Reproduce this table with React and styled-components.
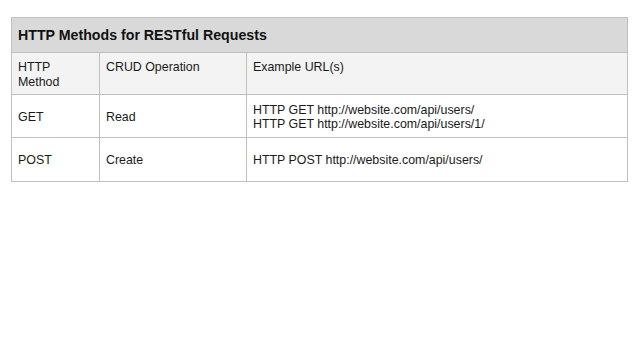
import React from "react";
import styled, { createGlobalStyle } from "styled-components";

const GlobalStyle = createGlobalStyle`
  body {
    margin: 0;
    background: #ffffff;
    font-family: "Liberation Sans", Arial, sans-serif;
    color: #1a1a1a;
  }
`;

const Page = styled.div`
  width: 638px;
  height: 359px;
  padding: 17px 11px 0 11px;
  box-sizing: border-box;
`;

const Table = styled.table`
  width: 617px;
  border-collapse: collapse;
  table-layout: fixed;
  font-size: 12.4px;
  line-height: 14.5px;
`;

const TitleCell = styled.th`
  background: #d9d9d9;
  border: 1px solid #c0c0c0;
  height: 35px;
  padding: 0 6px;
  box-sizing: border-box;
  text-align: left;
  font-size: 14.2px;
  font-weight: bold;
  color: #111;
`;

const Row = styled.tr`
  background: ${props => (props.head ? "#f3f3f3" : "#ffffff")};
`;

const Cell = styled.td`
  border: 1px solid #c0c0c0;
  height: ${props => props.h || 43}px;
  padding: ${props => (props.top ? "7px 6px 0" : "2px 6px 0")};
  box-sizing: border-box;
  vertical-align: ${props => (props.top ? "top" : "middle")};
  text-align: left;
`;

const rows = [
  { method: "GET", op: "Read", urls: ["HTTP GET http://website.com/api/users/", "HTTP GET http://website.com/api/users/1/"] },
  { method: "POST", op: "Create", urls: ["HTTP POST http://website.com/api/users/"] }
];

export default function App() {
  return (
    <>
      <GlobalStyle />
      <Page>
        <Table>
          <colgroup>
            <col style={{ width: 88 }} />
            <col style={{ width: 147 }} />
            <col />
          </colgroup>
          <tbody>
            <tr>
              <TitleCell colSpan={3}>HTTP Methods for RESTful Requests</TitleCell>
            </tr>
            <Row head>
              <Cell top h={42}>HTTP<br />Method</Cell>
              <Cell top h={42}>CRUD Operation</Cell>
              <Cell top h={42}>Example URL(s)</Cell>
            </Row>
            {rows.map((r, i) => (
              <Row key={i}>
                <Cell h={i === 0 ? 43 : 44}>{r.method}</Cell>
                <Cell h={i === 0 ? 43 : 44}>{r.op}</Cell>
                <Cell h={i === 0 ? 43 : 44}>
                  {r.urls.map((u, j) => (
                    <div key={j}>{u}</div>
                  ))}
                </Cell>
              </Row>
            ))}
          </tbody>
        </Table>
      </Page>
    </>
  );
}
